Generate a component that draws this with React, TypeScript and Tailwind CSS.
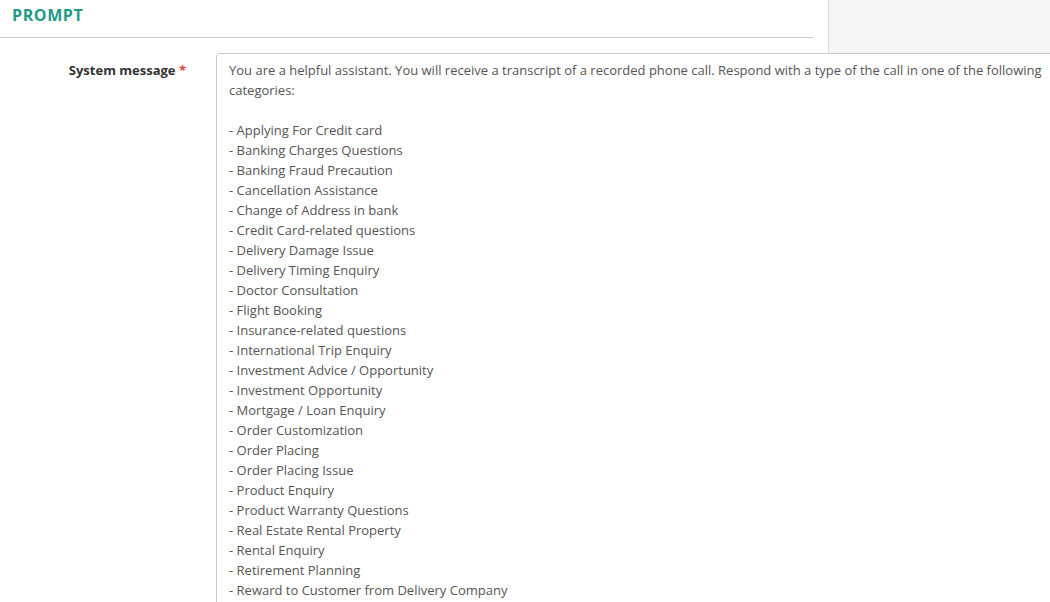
import React from "react";

const items = [
  "Applying For Credit card",
  "Banking Charges Questions",
  "Banking Fraud Precaution",
  "Cancellation Assistance",
  "Change of Address in bank",
  "Credit Card-related questions",
  "Delivery Damage Issue",
  "Delivery Timing Enquiry",
  "Doctor Consultation",
  "Flight Booking",
  "Insurance-related questions",
  "International Trip Enquiry",
  "Investment Advice / Opportunity",
  "Investment Opportunity",
  "Mortgage / Loan Enquiry",
  "Order Customization",
  "Order Placing",
  "Order Placing Issue",
  "Product Enquiry",
  "Product Warranty Questions",
  "Real Estate Rental Property",
  "Rental Enquiry",
  "Retirement Planning",
  "Reward to Customer from Delivery Company",
];

export default function App() {
  return (
    <div
      className="w-[1050px] h-[602px] overflow-hidden bg-white relative"
      style={{ fontFamily: '"Open Sans", "Noto Sans", sans-serif' }}
    >
      <div className="flex">
        <div className="w-[813px] shrink-0 h-[53px]">
          <div className="h-[38px] border-b border-[#cacaca] pl-[12px] pt-[3px]">
            <span className="text-[16px] leading-[24px] font-bold text-[#1f9a87] tracking-[0.6px]">
              PROMPT
            </span>
          </div>
        </div>
        <div className="w-[15px] shrink-0" />
        <div className="flex-1 h-[53px] bg-[#f5f5f7] border-l border-[#dedede]" />
      </div>
      <div className="flex">
        <div className="w-[186px] shrink-0 pt-[7px] text-right text-[13px] leading-[20px] font-bold text-[#333333]">
          System message <span className="text-[#e0413a]">*</span>
        </div>
        <div className="ml-[30px] w-[870px] shrink-0 h-[560px] border border-[#cccccc] rounded-[3px] px-[12px] pt-[6px] text-[13px] leading-[20px] text-[#555555]">
          <div>
            You are a helpful assistant. You will receive a transcript of a recorded phone call. Respond with a type of the call in one of the following
          </div>
          <div>categories:</div>
          <div className="h-[20px]" />
          {items.map((t) => (
            <div key={t}>- {t}</div>
          ))}
        </div>
      </div>
    </div>
  );
}
